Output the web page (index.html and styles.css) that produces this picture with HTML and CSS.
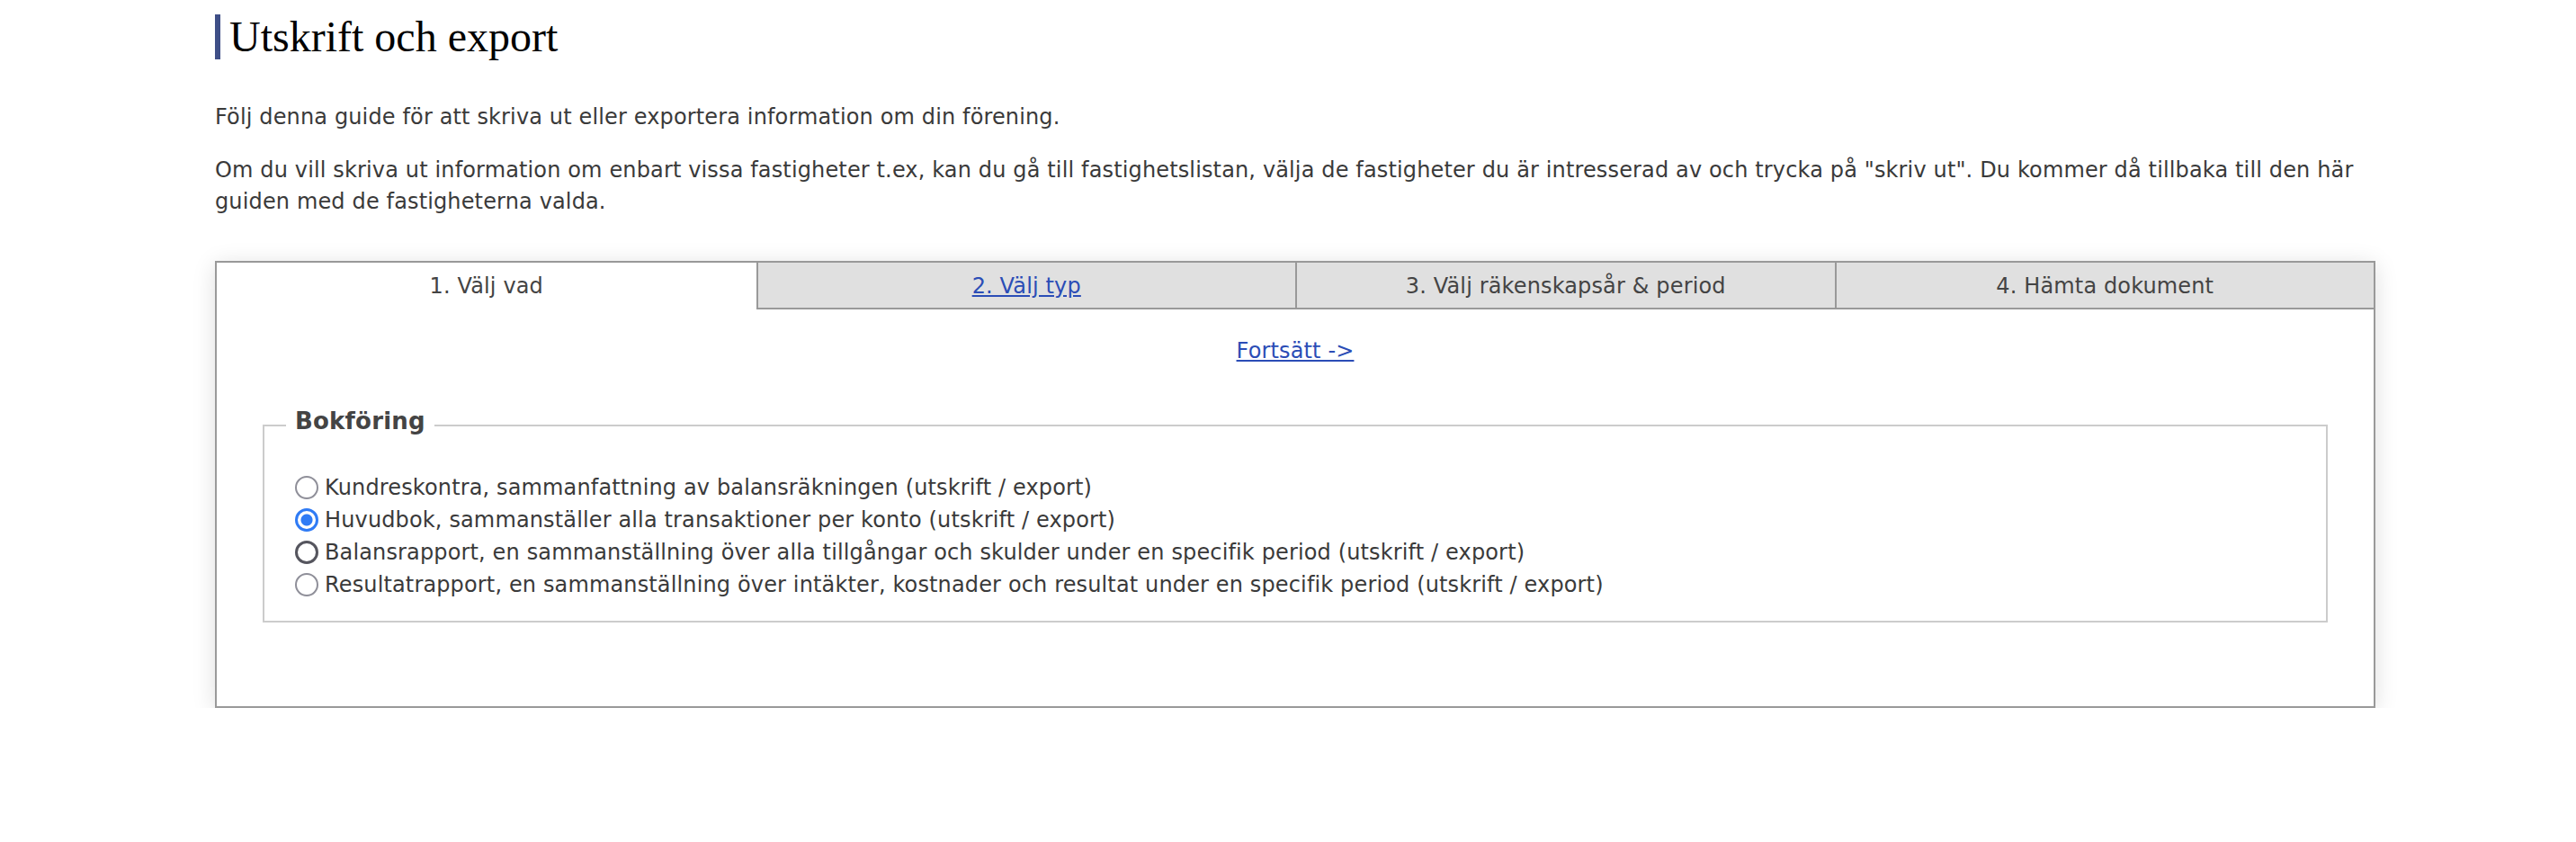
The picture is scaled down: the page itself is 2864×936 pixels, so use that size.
FILE: index.html
```html
<!DOCTYPE html>
<html lang="sv">
<head>
<meta charset="utf-8">
<title>Utskrift och export</title>
<link rel="stylesheet" href="styles.css">
</head>
<body>
<div class="page">
  <h1 class="title">Utskrift och export</h1>
  <p class="intro">Följ denna guide för att skriva ut eller exportera information om din förening.</p>
  <p class="intro">Om du vill skriva ut information om enbart vissa fastigheter t.ex, kan du gå till fastighetslistan, välja de fastigheter du är intresserad av och trycka på "skriv ut". Du kommer då tillbaka till den här guiden med de fastigheterna valda.</p>

  <div class="wizard">
    <div class="tabs">
      <div class="tab active">1. Välj vad</div>
      <div class="tab"><a href="#" class="tablink">2. Välj typ</a></div>
      <div class="tab">3. Välj räkenskapsår &amp; period</div>
      <div class="tab">4. Hämta dokument</div>
    </div>
    <div class="wizard-body">
      <div class="next"><a href="#" class="nextlink">Fortsätt -&gt;</a></div>
      <fieldset class="group">
        <legend class="group-title">Bokföring</legend>
        <label class="option"><input type="radio" name="doc" class="radio"><span>Kundreskontra, sammanfattning av balansräkningen (utskrift / export)</span></label>
        <label class="option"><input type="radio" name="doc" class="radio" checked><span>Huvudbok, sammanställer alla transaktioner per konto (utskrift / export)</span></label>
        <label class="option"><input type="radio" name="doc" class="radio hover"><span>Balansrapport, en sammanställning över alla tillgångar och skulder under en specifik period (utskrift / export)</span></label>
        <label class="option"><input type="radio" name="doc" class="radio"><span>Resultatrapport, en sammanställning över intäkter, kostnader och resultat under en specifik period (utskrift / export)</span></label>
      </fieldset>
    </div>
  </div>
</div>
</body>
</html>
```

FILE: styles.css
```css
html, body {
  margin: 0;
  padding: 0;
  background: #ffffff;
}

body {
  font-family: "DejaVu Sans", Verdana, sans-serif;
  font-size: 24px;
  letter-spacing: 0.14px;
  color: #3a3a3a;
}

.page {
  width: 2402px;
  margin-left: 239px;
  padding-top: 16px;
}

.title {
  margin: 0;
  height: 50px;
  line-height: 50px;
  border-left: 6px solid #3f4f87;
  padding-left: 10px;
  font-family: "Liberation Serif", "Times New Roman", serif;
  font-weight: normal;
  font-size: 48px;
  letter-spacing: 0;
  color: #000000;
}

.intro {
  margin: 0;
  line-height: 35px;
  padding-right: 20px;
}

.title + .intro {
  margin-top: 47px;
}

.intro + .intro {
  margin-top: 24px;
}

.wizard {
  margin-top: 48px;
  border: 2px solid #999999;
  background: #ffffff;
  box-shadow: 0 4px 24px rgba(0, 0, 0, 0.13);
}

.tabs {
  display: grid;
  grid-template-columns: repeat(4, 1fr);
}

.tab {
  height: 47px;
  padding-top: 3px;
  line-height: 47px;
  text-align: center;
  color: #444444;
  background: #e0e0e0;
  border-left: 2px solid #999999;
  border-bottom: 2px solid #999999;
}

.tab.active {
  background: #ffffff;
  border-left: none;
  border-bottom: 2px solid transparent;
}

.tablink,
.nextlink {
  color: #2b4db6;
  text-decoration: underline;
  text-underline-offset: 2px;
}

.wizard-body {
  padding: 29px 51px 93px 51px;
}

.next {
  text-align: center;
  line-height: 35px;
  margin-bottom: 43px;
}

.group {
  margin: 0;
  border: 2px solid #cccccc;
  padding: 30px 24px 22px 24px;
}

.group-title {
  padding: 0 10px 8px 10px;
  font-weight: bold;
  font-size: 26px;
  line-height: 35px;
  letter-spacing: 0.2px;
  color: #444444;
}

.option {
  display: flex;
  align-items: center;
  height: 36px;
  line-height: 36px;
}

.radio {
  appearance: none;
  -webkit-appearance: none;
  width: 26px;
  height: 26px;
  margin: 0 7px 0 10px;
  border: 2px solid #8f8f99;
  border-radius: 50%;
  background: #ffffff;
  flex: none;
}

.radio.hover {
  border: 3px solid #55555e;
}

.radio:checked {
  border: 3px solid #2f7bf5;
  background: radial-gradient(circle, #2f7bf5 0 6px, #ffffff 7px);
}
```
